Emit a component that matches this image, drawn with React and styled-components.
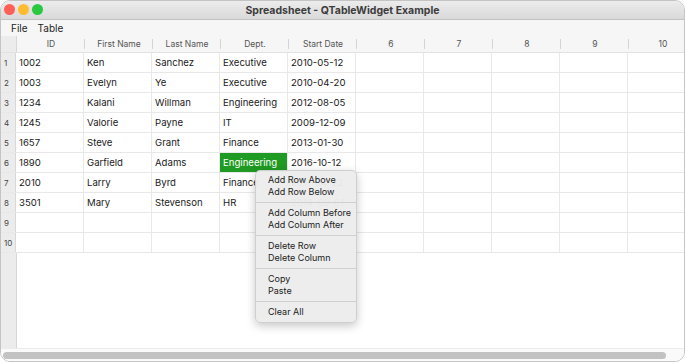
import React from "react";
import styled, { createGlobalStyle } from "styled-components";

const GlobalStyle = createGlobalStyle`
	html, body {
		margin: 0;
		padding: 0;
		background: #ffffff;
	}
	body {
		font-family: "Inter", "Liberation Sans", sans-serif;
	}
`;

const COLS = ["ID", "First Name", "Last Name", "Dept.", "Start Date", "6", "7", "8", "9", "10"];

const DATA = [
	["1002", "Ken", "Sanchez", "Executive", "2010-05-12"],
	["1003", "Evelyn", "Ye", "Executive", "2010-04-20"],
	["1234", "Kalani", "Willman", "Engineering", "2012-08-05"],
	["1245", "Valorie", "Payne", "IT", "2009-12-09"],
	["1657", "Steve", "Grant", "Finance", "2013-01-30"],
	["1890", "Garfield", "Adams", "Engineering", "2016-10-12"],
	["2010", "Larry", "Byrd", "Finance", "2011-04-22"],
	["3501", "Mary", "Stevenson", "HR", "2014-09-01"],
	[],
	[],
];

const MENU = [
	["Add Row Above", "Add Row Below"],
	["Add Column Before", "Add Column After"],
	["Delete Row", "Delete Column"],
	["Copy", "Paste"],
	["Clear All"],
];

const App = () => {
	return (
		<>
			<GlobalStyle />
			<Window>
				<TitleBar>
					<Lights>
						<Light color="#fe5f57" />
						<Light color="#febc2e" />
						<Light color="#28c840" />
					</Lights>
					<Title>Spreadsheet - QTableWidget Example</Title>
				</TitleBar>
				<MenuBar>
					<MenuItem>File</MenuItem>
					<MenuItem>Table</MenuItem>
				</MenuBar>
				<TableArea>
					<HeaderRow>
						<Corner />
						{COLS.map((c) => (
							<HeadCell key={c}>{c}</HeadCell>
						))}
					</HeaderRow>
					{DATA.map((row, r) => (
						<Row key={r}>
							<RowHead>{r + 1}</RowHead>
							{COLS.map((c, i) => (
								<Cell key={c} selected={r === 5 && i === 3}>
									{row[i] || ""}
								</Cell>
							))}
						</Row>
					))}
					<Filler>
						<RowHeadStrip />
					</Filler>
					<ContextMenu>
						{MENU.map((group, g) => (
							<MenuGroup key={g} first={g === 0}>
								{group.map((item) => (
									<ContextItem key={item}>{item}</ContextItem>
								))}
							</MenuGroup>
						))}
					</ContextMenu>
				</TableArea>
				<ScrollTrack>
					<ScrollThumb />
				</ScrollTrack>
			</Window>
		</>
	);
};

const Window = styled.div`
	width: 685px;
	height: 362px;
	box-sizing: border-box;
	display: flex;
	flex-direction: column;
	border: 1px solid #c4c4c4;
	border-radius: 10px;
	overflow: hidden;
	background: #ffffff;
`;

const TitleBar = styled.div`
	position: relative;
	height: 18px;
	flex: none;
	display: flex;
	align-items: center;
	justify-content: center;
	background: linear-gradient(#ececec, #d9d9d9);
	border-bottom: 1px solid #c2c2c2;
`;

const Lights = styled.div`
	position: absolute;
	left: 3px;
	top: 3px;
	display: flex;
	gap: 3px;
`;

const Light = styled.span`
	width: 11px;
	height: 11px;
	border-radius: 50%;
	background: ${(p) => p.color};
`;

const Title = styled.div`
	font-size: 10.5px;
	font-weight: 700;
	color: #3c3c3c;
`;

const MenuBar = styled.div`
	height: 16px;
	flex: none;
	display: flex;
	align-items: center;
	gap: 10px;
	padding-left: 10px;
	background: #f6f6f6;
`;

const MenuItem = styled.span`
	font-size: 10px;
	color: #1e1e1e;
`;

const TableArea = styled.div`
	position: relative;
	flex: 1;
	display: flex;
	flex-direction: column;
	overflow: hidden;
	background: #ffffff;
`;

const HeaderRow = styled.div`
	display: flex;
	height: 16px;
	flex: none;
	background: #f6f6f6;
	border-bottom: 1px solid #e2e2e2;
`;

const Corner = styled.div`
	width: 15px;
	flex: none;
	border-right: 1px solid #d8d8d8;
	background: #ececec;
`;

const HeadCell = styled.div`
	width: 68px;
	flex: none;
	display: flex;
	align-items: center;
	justify-content: center;
	font-size: 8.5px;
	color: #555555;
	position: relative;

	&:not(:last-child)::after {
		content: "";
		position: absolute;
		right: 0;
		top: 3px;
		bottom: 3px;
		width: 1px;
		background: #d4d4d4;
	}
`;

const Row = styled.div`
	display: flex;
	height: 20px;
	flex: none;
	box-sizing: border-box;
	border-bottom: 1px solid #e8e8e8;
`;

const RowHead = styled.div`
	width: 15px;
	flex: none;
	display: flex;
	align-items: center;
	padding-left: 3px;
	box-sizing: border-box;
	font-size: 8px;
	color: #444444;
	background: #ececec;
	border-right: 1px solid #d8d8d8;
`;

const Cell = styled.div`
	width: 68px;
	flex: none;
	box-sizing: border-box;
	display: flex;
	align-items: center;
	padding-left: 3px;
	font-size: 9.6px;
	white-space: nowrap;
	color: ${(p) => (p.selected ? "#ffffff" : "#1a1a1a")};
	background: ${(p) => (p.selected ? "#1f9a22" : "transparent")};
	border-right: 1px solid #e8e8e8;
`;

const Filler = styled.div`
	flex: 1;
	display: flex;
`;

const RowHeadStrip = styled.div`
	width: 15px;
	background: #ececec;
	border-right: 1px solid #d8d8d8;
`;

const ContextMenu = styled.div`
	position: absolute;
	left: 254px;
	top: 134px;
	width: 102px;
	box-sizing: border-box;
	padding: 3px 0 4px;
	background: rgba(236, 236, 236, 0.97);
	border: 1px solid #cfcfcf;
	border-radius: 5px;
	box-shadow: 0 3px 10px rgba(0, 0, 0, 0.22);
`;

const MenuGroup = styled.div`
	padding: ${(p) => (p.first ? "0 0 4px" : "4px 0")};
	border-top: ${(p) => (p.first ? "none" : "1px solid #d0d0d0")};
	&:last-child {
		padding-bottom: 0;
	}
`;

const ContextItem = styled.div`
	height: 12px;
	line-height: 12px;
	padding-left: 12px;
	font-size: 9px;
	white-space: nowrap;
	color: #222222;
`;

const ScrollTrack = styled.div`
	height: 12px;
	flex: none;
	display: flex;
	align-items: center;
	padding: 0 18px 0 2px;
	background: #fafafa;
	border-top: 1px solid #ececec;
`;

const ScrollThumb = styled.div`
	flex: 1;
	height: 7px;
	border-radius: 4px;
	background: #c2c2c2;
`;

export default App;
